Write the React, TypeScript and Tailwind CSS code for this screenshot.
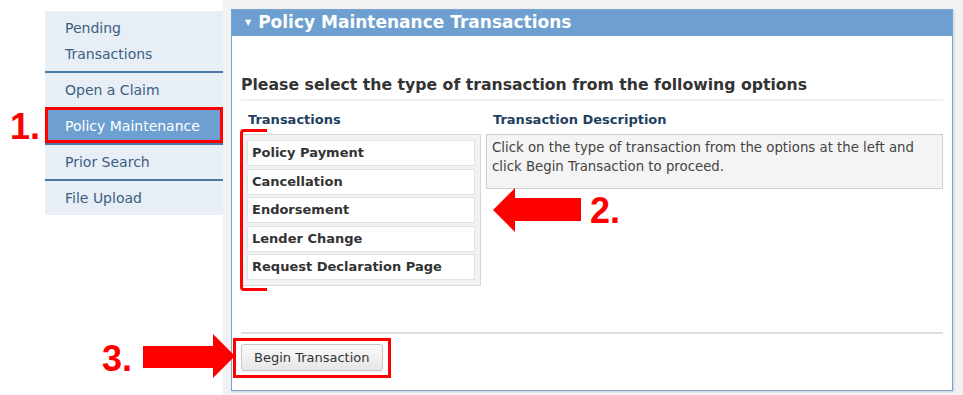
import type { ReactNode } from "react";

const navItems = [
  { label: "Pending Transactions", active: false },
  { label: "Open a Claim", active: false },
  { label: "Policy Maintenance", active: true },
  { label: "Prior Search", active: false },
  { label: "File Upload", active: false },
];

const transactions = [
  "Policy Payment",
  "Cancellation",
  "Endorsement",
  "Lender Change",
  "Request Declaration Page",
];

const Step = ({ children, className }: { children: ReactNode; className: string }) => (
  <span
    className={`absolute font-bold text-[36px] leading-none text-[#f00] font-['Liberation_Sans',sans-serif] ${className}`}
  >
    {children}
  </span>
);

export default function App() {
  return (
    <div className="relative flex w-[963px] h-[395px] bg-white font-['DejaVu_Sans',Verdana,sans-serif] overflow-hidden">
      {/* left nav */}
      <div className="w-[223px] shrink-0 pl-[45px] pt-[11px]">
        <nav className="bg-[#e8eef5]">
          {navItems.map((item, i) => (
            <div
              key={item.label}
              className={`relative px-[20px] py-[4px] text-[14px] leading-[26px] ${
                i < navItems.length - 1 ? "border-b-2 border-[#4a78a4]" : ""
              } ${item.active ? "bg-[#6d9fd0] text-white" : "text-[#3b5f82]"}`}
            >
              {item.label === "Pending Transactions" ? (
                <>
                  Pending
                  <br />
                  Transactions
                </>
              ) : (
                item.label
              )}
              {item.active && (
                <div className="absolute -top-[2px] left-0 right-0 bottom-0 border-[3px] border-[#f00]" />
              )}
            </div>
          ))}
        </nav>
      </div>

      {/* main panel */}
      <div className="flex-1 bg-[#f2f2f4] pl-[8px] pt-[9px] pr-[10px]">
        <div className="h-[382px] flex flex-col border border-[#7aa6cd] bg-white shadow-[1px_1px_2px_rgba(0,0,0,0.15)]">
          <div className="h-[26px] flex items-center gap-[7px] bg-[#6d9fd0] px-[13px] text-white">
            <span className="text-[8px]">▼</span>
            <span className="font-bold text-[17px]">Policy Maintenance Transactions</span>
          </div>

          <div className="flex flex-col px-[9px] pt-[38px]">
            <h2 className="pb-[3px] border-b-2 border-[#efefef] font-bold text-[15.7px] leading-[22px] text-[#333]">
              Please select the type of transaction from the following options
            </h2>

            <div className="flex gap-[5px] mt-[9px]">
              <div className="w-[240px] shrink-0">
                <div className="px-[7px] text-[13px] font-bold leading-[20px] text-[#1e3f60]">
                  Transactions
                </div>
                <div className="mt-[4px] flex flex-col gap-[2.5px] bg-[#f2f2f2] border border-[#d8d8d8] p-[5px]">
                  {transactions.map((t) => (
                    <div
                      key={t}
                      className="h-[26px] flex items-center bg-white border border-[#e2e2e2] px-[4px] font-bold text-[13px] text-[#333]"
                    >
                      {t}
                    </div>
                  ))}
                </div>
              </div>

              <div className="flex-1">
                <div className="px-[7px] text-[13px] font-bold leading-[20px] text-[#1e3f60]">
                  Transaction Description
                </div>
                <div className="mt-[4px] h-[55px] bg-[#f4f4f4] border border-[#cfcfcf] px-[5px] py-[3px] text-[13.3px] leading-[19px] text-[#444]">
                  Click on the type of transaction from the options at the left and
                  <br />
                  click Begin Transaction to proceed.
                </div>
              </div>
            </div>

            <div className="mt-[46px] border-t-2 border-[#dedede] pt-[10px]">
              <button
                type="button"
                className="h-[27px] px-[12px] rounded-[3px] border border-[#c8c8c8] bg-gradient-to-b from-[#fafafa] to-[#e6e6e6] text-[13px] text-[#333] shadow-[0_1px_1px_rgba(0,0,0,0.08)]"
              >
                Begin Transaction
              </button>
            </div>
          </div>
        </div>
      </div>

      {/* annotations */}
      <Step className="left-[10px] top-[109px]">1.</Step>
      <Step className="left-[590px] top-[193px]">2.</Step>
      <Step className="left-[102px] top-[341px]">3.</Step>

      <div className="absolute left-[240px] top-[129px] w-[27px] h-[162px] border-l-[3px] border-y-[3px] border-[#f00] rounded-l-[4px]" />

      <svg className="absolute left-[493px] top-[188px]" width="88" height="44" viewBox="0 0 88 44">
        <polygon points="0,22 22,0 22,10 88,10 88,33 22,33 22,44" fill="#f00" />
      </svg>

      <svg className="absolute left-[143px] top-[334px]" width="92" height="44" viewBox="0 0 92 44">
        <polygon points="0,12 70,12 70,0 92,22 70,44 70,34 0,34" fill="#f00" />
      </svg>

      <div className="absolute left-[233px] top-[338px] w-[158px] h-[40px] border-[3px] border-[#f00]" />
    </div>
  );
}
